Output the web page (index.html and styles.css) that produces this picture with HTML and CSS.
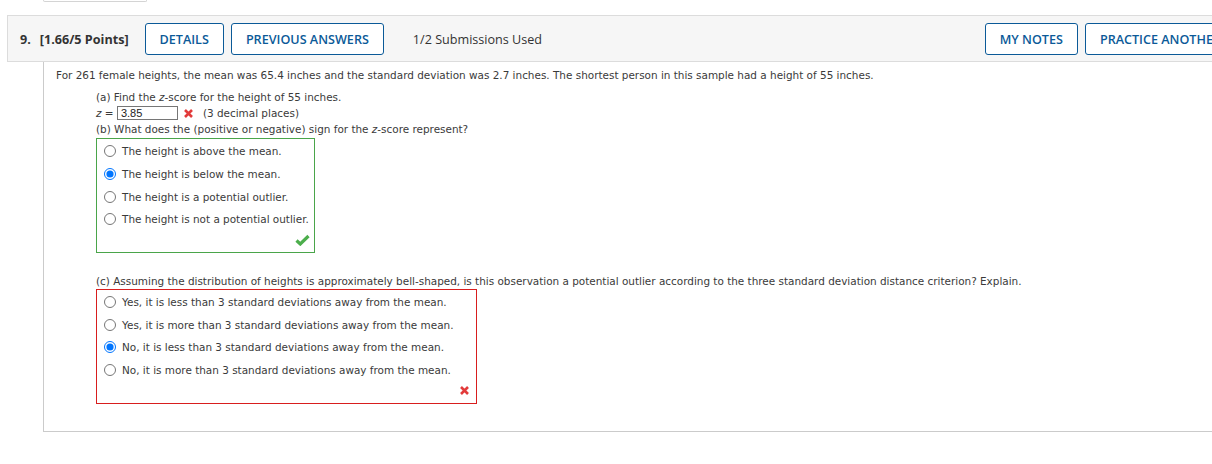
FILE: index.html
```html
<!DOCTYPE html>
<html>
<head>
<meta charset="utf-8">
<link rel="stylesheet" href="styles.css">
</head>
<body>
<div class="prev-box"></div>
<div class="qhead">
  <span class="qnum">9.</span><span class="qpts">[1.66/5 Points]</span>
  <button class="btn">DETAILS</button>
  <button class="btn">PREVIOUS ANSWERS</button>
  <span class="subs">1/2 Submissions Used</span>
  <button class="btn push">MY NOTES</button>
  <button class="btn">PRACTICE ANOTHER</button>
</div>
<div class="content">
  <p class="intro">For 261 female heights, the mean was 65.4 inches and the standard deviation was 2.7 inches. The shortest person in this sample had a height of 55 inches.</p>
  <div class="parts">
    <div class="line">(a) Find the <i>z</i>-score for the height of 55 inches.</div>
    <div class="line zline"><i>z</i>&nbsp;=&nbsp;<span class="answer">3.85</span>
      <svg class="xmark" width="11" height="11" viewBox="0 0 11 11"><path d="M2 2 L9 9 M9 2 L2 9" stroke="#e23b3b" stroke-width="2.6" stroke-linecap="butt"/></svg>
      <span class="hint">(3 decimal places)</span></div>
    <div class="line">(b) What does the (positive or negative) sign for the <i>z</i>-score represent?</div>
    <div class="choices correct">
      <label class="opt"><input type="radio" name="b"><span>The height is above the mean.</span></label>
      <label class="opt"><input type="radio" name="b" checked><span>The height is below the mean.</span></label>
      <label class="opt"><input type="radio" name="b"><span>The height is a potential outlier.</span></label>
      <label class="opt"><input type="radio" name="b"><span>The height is not a potential outlier.</span></label>
      <div class="mark"><svg width="15" height="12" viewBox="0 0 15 12"><path d="M1.5 6.5 L5.3 10 L13.5 2" fill="none" stroke="#4cae4c" stroke-width="3.2"/></svg></div>
    </div>
    <div class="line partc">(c) Assuming the distribution of heights is approximately bell-shaped, is this observation a potential outlier according to the three standard deviation distance criterion? Explain.</div>
    <div class="choices wrong">
      <label class="opt"><input type="radio" name="c"><span>Yes, it is less than 3 standard deviations away from the mean.</span></label>
      <label class="opt"><input type="radio" name="c"><span>Yes, it is more than 3 standard deviations away from the mean.</span></label>
      <label class="opt"><input type="radio" name="c" checked><span>No, it is less than 3 standard deviations away from the mean.</span></label>
      <label class="opt"><input type="radio" name="c"><span>No, it is more than 3 standard deviations away from the mean.</span></label>
      <div class="mark"><svg width="11" height="11" viewBox="0 0 11 11"><path d="M2 2 L9 9 M9 2 L2 9" stroke="#e23b3b" stroke-width="2.6"/></svg></div>
    </div>
  </div>
</div>
</body>
</html>
```
FILE: styles.css
```css
html, body {
  margin: 0;
  padding: 0;
  background: #fff;
  overflow: hidden;
}
body {
  width: 1212px;
  height: 464px;
}
.prev-box {
  margin-left: 43px;
  width: 102px;
  height: 1px;
  border: 1px solid #d4d4d4;
  border-top: none;
  border-radius: 0 0 3px 3px;
}
.qhead {
  margin-top: 13px;
  margin-left: 7px;
  width: 1223px;
  height: 45px;
  box-sizing: content-box;
  background: #f6f6f6;
  border: 1px solid #dcdcdc;
  display: flex;
  align-items: center;
  padding: 0 12px;
  font-family: "Open Sans", sans-serif;
  font-size: 12.6px;
  color: #333;
  white-space: nowrap;
}
.qnum {
  font-weight: 700;
  margin-right: 9px;
  padding-top: 1px;
}
.qpts {
  font-weight: 700;
  margin-right: 16px;
  padding-top: 1px;
}
.btn {
  height: 32px;
  padding: 1px 14px 0;
  margin-right: 7px;
  background: #fff;
  border: 1px solid #0b5a98;
  border-radius: 3px;
  color: #0b5a98;
  font-family: "Open Sans", sans-serif;
  font-size: 12.6px;
  font-weight: 600;
  flex: none;
}
.subs {
  margin-left: 22px;
  color: #333;
  padding-top: 1px;
}
.push {
  margin-left: auto;
}
.content {
  margin-left: 43px;
  border-left: 1px solid #cbcbcb;
  border-bottom: 1px solid #cbcbcb;
  padding: 5px 0 27px 12px;
  font-family: "DejaVu Sans", Verdana, sans-serif;
  font-size: 10.45px;
  color: #3a3a3a;
}
.intro {
  margin: 0;
  line-height: 16px;
}
.parts {
  margin-top: 6px;
  margin-left: 40px;
}
.line {
  line-height: 16px;
  white-space: nowrap;
}
.zline {
  display: flex;
  align-items: center;
}
.answer {
  display: inline-block;
  width: 54px;
  height: 12px;
  line-height: 12px;
  border: 1px solid #767676;
  padding: 0 2px 0 3px;
  font-family: "Liberation Sans", Arial, sans-serif;
  font-size: 11px;
  color: #222;
}
.xmark {
  margin-left: 5px;
  margin-right: 9px;
}
.choices {
  margin-top: 1px;
  padding: 1px 0 2px 0;
  box-sizing: border-box;
}
.correct {
  width: 219px;
  border: 1px solid #4aa54a;
}
.wrong {
  width: 381px;
  margin-top: 0;
  border: 1px solid #d81e1e;
  padding: 1px 0 4px 0;
}
.partc {
  margin-top: 20px;
}
.opt {
  display: flex;
  align-items: center;
  height: 22.7px;
  white-space: nowrap;
}
.opt input {
  margin: 0 6px 0 7px;
  width: 12px;
  height: 12px;
}
.mark {
  height: 19px;
  display: flex;
  justify-content: flex-end;
  align-items: center;
  padding-right: 4px;
}
.wrong .mark {
  height: 17px;
  padding-right: 6px;
}
```
